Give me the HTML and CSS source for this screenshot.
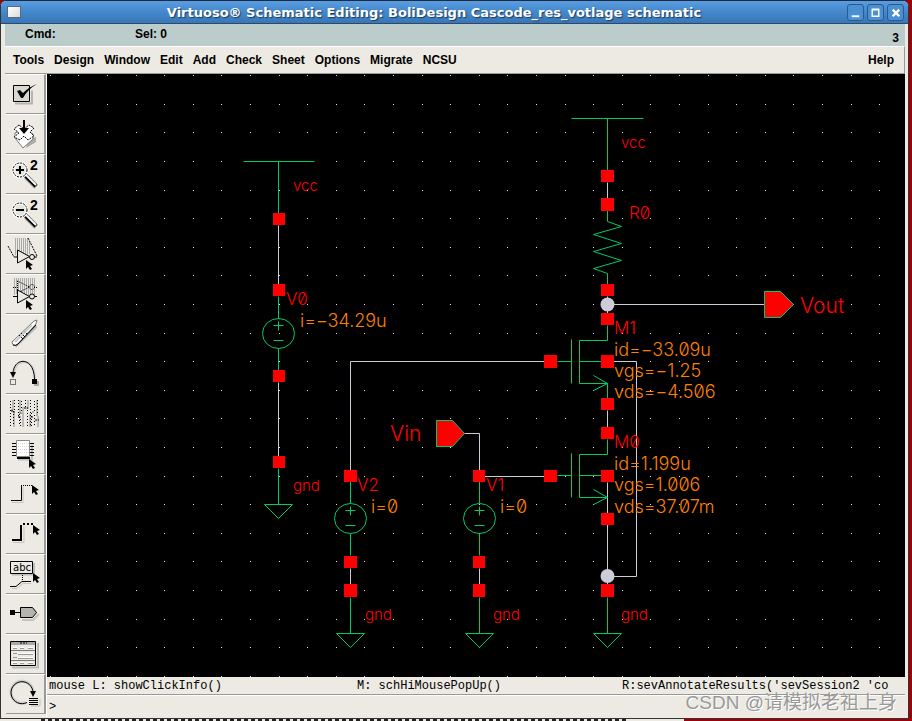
FILE: index.html
```html
<!DOCTYPE html>
<html lang="en">
<head>
  <meta charset="UTF-8" />
  <meta name="viewport" content="width=device-width, initial-scale=1.0" />
  <title>Virtuoso Schematic Editing</title>
  <link rel="stylesheet" href="styles.css">
</head>
<body>
  <div class="window">
    <header class="titlebar">
      <button class="window-menu" type="button" aria-label="Window menu"></button>
      <h1 class="title">Virtuoso® Schematic Editing: BoliDesign Cascode_res_votlage schematic</h1>
      <div class="window-controls">
        <button type="button" aria-label="Minimize"><svg viewBox="0 0 16 16"><path d="M4 12h8" stroke="#fff" stroke-width="2"/></svg></button>
        <button type="button" aria-label="Maximize"><svg viewBox="0 0 16 16"><path d="M4.500 5h7v7h-7z M4 4.500h8" fill="none" stroke="#fff" stroke-width="1.5"/></svg></button>
        <button type="button" aria-label="Close"><svg viewBox="0 0 16 16"><path d="M5 5l7 7M12 5l-7 7" stroke="#fff" stroke-width="2.5"/></svg></button>
      </div>
    </header>

    <div class="frame">
      <div class="infobar">
        <span class="cmd">Cmd:</span>
        <span class="sel">Sel: 0</span>
        <span class="count">3</span>
      </div>

      <nav class="menubar">
        <button type="button">Tools</button>
        <button type="button">Design</button>
        <button type="button">Window</button>
        <button type="button">Edit</button>
        <button type="button">Add</button>
        <button type="button">Check</button>
        <button type="button">Sheet</button>
        <button type="button">Options</button>
        <button type="button">Migrate</button>
        <button type="button">NCSU</button>
        <button type="button" class="help">Help</button>
      </nav>

      <div class="workspace">
        <div class="toolbar">
          <!-- check and save -->
          <button type="button" aria-label="Check and Save"><svg viewBox="0 0 40 40">
            <path d="M9 29.500h17v-13" fill="none" stroke="#b5b5ae" stroke-width="2"/>
            <path d="M7.500 11.500h16v16h-16z" fill="#d8d8d0" stroke="#000"/>
            <path d="M11 17l3-1 3 3q6-6 14-9q-9 5-14 14h-2z" fill="#000"/>
          </svg></button>
          <!-- save -->
          <button type="button" aria-label="Save"><svg viewBox="0 0 40 40">
            <path d="M20 34l10-6v-5l-8 3z" fill="#aaa"/>
            <path d="M9 24l8 10 10-9v-5l-9-5-9 4z" fill="#fff" stroke="#777"/>
            <path d="M13 11l-5 4 5 4-5 4 6 3 4-4 4 4 6-4-4-4 4-4-5-3-5 4z" fill="#fff" stroke="#000" stroke-dasharray="2 1"/>
            <path d="M17 6h2v8h4l-5 6-5-6h4z" fill="#000"/>
          </svg></button>
          <!-- zoom in -->
          <button type="button" aria-label="Zoom in by 2"><svg viewBox="0 0 40 40">
            <path d="M20 23l10 10" stroke="#aaa" stroke-width="5"/>
            <path d="M19 21l11 11" stroke="#000" stroke-width="4"/>
            <path d="M20 21l10 10" stroke="#fff" stroke-width="2"/>
            <circle cx="14" cy="16" r="7" fill="#e4e4dd" stroke="#fff" stroke-width="3"/>
            <circle cx="14" cy="16" r="7" fill="none" stroke="#000" stroke-dasharray="2 1"/>
            <path d="M10 16h8M14 12v8" stroke="#000" stroke-width="2"/>
            <text x="24" y="16" class="icon-num">2</text>
          </svg></button>
          <!-- zoom out -->
          <button type="button" aria-label="Zoom out by 2"><svg viewBox="0 0 40 40">
            <path d="M20 23l10 10" stroke="#aaa" stroke-width="5"/>
            <path d="M19 21l11 11" stroke="#000" stroke-width="4"/>
            <path d="M20 21l10 10" stroke="#fff" stroke-width="2"/>
            <circle cx="14" cy="16" r="7" fill="#e4e4dd" stroke="#fff" stroke-width="3"/>
            <circle cx="14" cy="16" r="7" fill="none" stroke="#000" stroke-dasharray="2 1"/>
            <path d="M10 16h8" stroke="#000" stroke-width="2"/>
            <text x="24" y="16" class="icon-num">2</text>
          </svg></button>
          <!-- stretch -->
          <button type="button" aria-label="Stretch"><svg viewBox="0 0 40 40">
            <path d="M9.500 4v17M11.500 4v12M13.500 4v13M15.500 4v14M17.500 4v15M19.500 4v16M21.500 4v17M23.500 8v12" stroke="#aaa"/>
            <path d="M2 12l6 11M22 4l9 18" stroke="#000" stroke-dasharray="2 1"/>
            <path d="M8 23h3M28 23h3" stroke="#000"/>
            <path d="M11.500 16v13l12-6.500z" fill="#eceae3" stroke="#000"/>
            <circle cx="26" cy="23" r="2.500" fill="#eceae3" stroke="#000"/>
            <use href="#cursor" x="20" y="26"/>
          </svg></button>
          <!-- copy -->
          <button type="button" aria-label="Copy"><svg viewBox="0 0 40 40">
            <path d="M8.500 4v17M10.500 4v16M12.500 4v14M14.500 4v16M16.500 4v16M18.500 4v17M20.500 4v17M22.500 4v17M24.500 4v17M26.500 4v17M28.500 4v18" stroke="#aaa"/>
            <path d="M11.500 7v12l12-6zM7 13.500h4M28 13.500h3" fill="none" stroke="#000" stroke-dasharray="1 1"/>
            <circle cx="26" cy="13" r="2.500" fill="none" stroke="#000" stroke-dasharray="1 1"/>
            <path d="M7 22.500h4M28 22.500h3" stroke="#000"/>
            <path d="M11.500 16v13l12-6.500z" fill="#eceae3" stroke="#000"/>
            <circle cx="26" cy="22.500" r="2.500" fill="#eceae3" stroke="#000"/>
            <use href="#cursor" x="20" y="26"/>
          </svg></button>
          <!-- delete -->
          <button type="button" aria-label="Delete"><svg viewBox="0 0 40 40">
            <path d="M9 32l21-20" stroke="#bbb" stroke-width="4"/>
            <path d="M6 28L28 7l3-1-1 4L11 31q-4 2-5-3z" fill="#fff" stroke="#777"/>
            <path d="M7 31q3 1 5-1L30 11" fill="none" stroke="#000"/>
            <path d="M13 21l4 4M15 19l4 4M18 17l3 3" stroke="#000"/>
            <path d="M9 28L26 11" stroke="#ccc" stroke-width="2"/>
          </svg></button>
          <!-- undo -->
          <button type="button" aria-label="Undo"><svg viewBox="0 0 40 40">
            <path d="M8 21Q9 8 19 8q9 1 10 16" fill="none" stroke="#ccc" stroke-width="2"/>
            <path d="M7 19C8 3 28 2 28.500 25" fill="none" stroke="#000"/>
            <path d="M4 18h6l-3 6z" fill="#000"/>
            <path d="M28 27h5v5h-5z" fill="#aaa"/>
            <path d="M26 25h5v5h-5z" fill="#000"/>
            <path d="M4.500 25.500h5v5h-5z" fill="none" stroke="#000" stroke-dasharray="1 1"/>
          </svg></button>
          <!-- property -->
          <button type="button" aria-label="Property"><svg viewBox="0 0 40 40">
            <path d="M7 6v10M8 19v14M14 6v14M17 13v20M22 6v9M24 20v13M31 6v14M32 22v11" stroke="#bbb" stroke-width="2"/>
            <path d="M4.500 7v26M8.500 6v10h-3M7.500 17v15M12.500 6v17h2v10M15.500 7v12h-2v13M19.500 6v8h2v19M24.500 6v26M28.500 7v11h-3v14M31.500 6v15h-3v10" fill="none" stroke="#000" stroke-dasharray="1 2"/>
            <path d="M5 17h3v3M12 23h3M18 14h4M25 23h3M29 26h4" fill="none" stroke="#000" stroke-dasharray="2 1"/>
          </svg></button>
          <!-- component -->
          <button type="button" aria-label="Component"><svg viewBox="0 0 40 40">
            <path d="M12 25.500h14V11" fill="none" stroke="#bbb" stroke-width="2"/>
            <path d="M6 9.500h22M6 12.500h22M6 15.500h22M6 18.500h22M6 21.500h22" stroke="#000"/>
            <path d="M10.500 6.500h13v16h-13z" fill="#fff" stroke="#888"/>
            <path d="M11 24h13" stroke="#000" stroke-width="2"/>
            <path d="M12 9.500h11M12 12.500h11M12 15.500h11M12 18.500h11" stroke="#ddd" stroke-dasharray="1 1"/>
            <use href="#cursor" x="23" y="25"/>
          </svg></button>
          <!-- wire narrow -->
          <button type="button" aria-label="Wire narrow"><svg viewBox="0 0 40 40">
            <path d="M6 28.500h11V13" fill="none" stroke="#c5c5be"/>
            <path d="M5 26.500h10.500V11" fill="none" stroke="#000"/>
            <path d="M15 11.500h11" stroke="#000" stroke-dasharray="1 1"/>
            <use href="#cursor" x="26" y="11"/>
          </svg></button>
          <!-- wire wide -->
          <button type="button" aria-label="Wire wide"><svg viewBox="0 0 40 40">
            <path d="M7 28.500h11V13" fill="none" stroke="#c5c5be"/>
            <path d="M6 26h9V11" fill="none" stroke="#000" stroke-width="2"/>
            <path d="M17 10h10" stroke="#000" stroke-width="2" stroke-dasharray="2 2"/>
            <use href="#cursor" x="27" y="11"/>
          </svg></button>
          <!-- wire name -->
          <button type="button" aria-label="Wire name"><svg viewBox="0 0 40 40">
            <path d="M6 20.500h22V9" fill="none" stroke="#bbb" stroke-width="2"/>
            <path d="M4.500 7.500h22v12h-22z" fill="#eceae3" stroke="#000"/>
            <text x="7" y="17" class="icon-abc">abc</text>
            <path d="M16.500 21v6" stroke="#000" stroke-dasharray="1 1"/>
            <path d="M4 32.500h6l6-5h9" fill="none" stroke="#000"/>
            <path d="M6 34.500h5l6-5h8" fill="none" stroke="#c5c5be"/>
            <use href="#cursor" x="27" y="19"/>
          </svg></button>
          <!-- pin -->
          <button type="button" aria-label="Pin"><svg viewBox="0 0 40 40">
            <path d="M16 26h11l6-6" fill="none" stroke="#c5c5be" stroke-width="2"/>
            <path d="M4 16h5v5H4zM9 18h5v1H9z" fill="#000"/>
            <path d="M14.500 13.500h12l4 5-4 5h-12z" fill="#b5b5b0" stroke="#000"/>
          </svg></button>
          <!-- command options -->
          <button type="button" aria-label="Command options"><svg viewBox="0 0 40 40">
            <path d="M6 33.500h26V9" fill="none" stroke="#bbb" stroke-width="2"/>
            <path d="M4.500 7.500h25v24h-25z" fill="#eceae3" stroke="#000"/>
            <path d="M5 9.500h24" stroke="#aaa" stroke-width="3"/>
            <path d="M14 9h7" stroke="#000" stroke-dasharray="2 1"/>
            <path d="M5 16.500h24M5 26.500h24" stroke="#777"/>
            <path d="M7 14.500h4M14 14.500h4M22 14.500h5M7 19.500h4M7 23.500h4M12 20.500h15M12 24.500h15M7 29.500h4M14 29.500h4M22 29.500h5" stroke="#999"/>
            <path d="M7 13.500h4M14 13.500h4M22 13.500h5M12 19.500h15M12 23.500h15M7 28.500h4M14 28.500h4M22 28.500h5" stroke="#fff"/>
          </svg></button>
          <!-- repeat -->
          <button type="button" aria-label="Repeat"><svg viewBox="0 0 40 40">
            <path d="M20 28.500A11 11 0 1 1 27 19" fill="none" stroke="#ccc" stroke-width="3"/>
            <path d="M21 28.500A11 11 0 1 1 27 19" fill="none" stroke="#000"/>
            <path d="M24 17h6l-3 6z" fill="#000"/>
            <path d="M25 32h9v-7" fill="none" stroke="#bbb"/>
            <path d="M23 24.500h9M23 26.500h9M23 28.500h9M23 30.500h9" stroke="#000"/>
          </svg></button>
        </div>

        <main class="editor">
          <div class="canvas">
            <svg class="schematic" viewBox="47 74 858 603" preserveAspectRatio="xMinYMin slice">
              <defs>
                <path id="cursor" d="M0 0l7 5-3 1 2 3-2 1-2-3-2 2z" fill="#000"/>
                <!-- five grid steps per tile -->
                <pattern id="grid" x="50" y="75" width="143" height="143" patternUnits="userSpaceOnUse">
                  <path id="gridrow" d="M0 0h1v1h-1zM28 0h1v1h-1zM57 0h1v1h-1zM86 0h1v1h-1zM114 0h1v1h-1z"/>
                  <use href="#gridrow" y="29"/>
                  <use href="#gridrow" y="57"/>
                  <use href="#gridrow" y="86"/>
                  <use href="#gridrow" y="115"/>
                </pattern>
                <g id="source">
                  <ellipse cx="0" cy="0" rx="16" ry="15"/>
                  <path d="M-5 -8h10M0 -12v9M-5 7h10M0 -37v22M0 15v22"/>
                </g>
                <path id="gnd" d="M0 -36V0M-14 0h28l-14 14z"/>
                <g id="nmos">
                  <path d="M-50 0h14M-36 -22v44M0 -36v15h-28v43h28M-28 0h22M-14 14l14 8l-14 7"/>
                </g>
              </defs>

              <rect class="grid" x="47" y="74" width="858" height="603"/>

              <g class="wire" transform="translate(.5 .5)">
                <path d="M278 225v59M278 382v74"/>
                <path d="M544 361H350v109M350 568v16"/>
                <path d="M464 433h15v37M479 476h65M479 568v16"/>
                <path d="M607 182v16M607 296v17M607 304h157"/>
                <path d="M607 410v17M607 482v102M613 361h23v215h-29"/>
              </g>

              <g class="device" transform="translate(.5 .5)">
                <path d="M243 161h71M278 161v52"/>
                <path d="M571 118h72M607 118v52"/>
                <use href="#source" x="278" y="333"/>
                <use href="#source" x="350" y="518"/>
                <use href="#source" x="479" y="518"/>
                <use href="#gnd" x="278" y="504"/>
                <use href="#gnd" x="350" y="633"/>
                <use href="#gnd" x="479" y="633"/>
                <use href="#gnd" x="607" y="633"/>
                <use href="#nmos" x="607" y="361"/>
                <use href="#nmos" x="607" y="475"/>
                <path d="M607 383v15"/>
                <path d="M607 210v11l14 5-28 8 28 9-28 8 28 9-28 8 14 5v11"/>
              </g>

              <g class="port" transform="translate(.5 .5)">
                <path d="M436 420h16l12 13-12 13h-16z"/>
                <path d="M764 291h16l13 13-13 13h-16z"/>
              </g>

              <g class="pin">
                <path d="M273 213h12v12h-12zM273 284h12v12h-12zM273 370h12v12h-12zM273 456h12v12h-12z"/>
                <path d="M344 470h13v12h-13zM344 556h13v12h-13zM344 584h13v13h-13z"/>
                <path d="M473 470h12v12h-12zM473 556h12v12h-12zM473 584h12v13h-12z"/>
                <path d="M544 355h13v13h-13zM544 470h13v12h-13z"/>
                <path d="M601 170h13v12h-13zM601 198h13v13h-13zM601 284h13v12h-13zM601 313h13v12h-13zM601 355h13v13h-13z"/>
                <path d="M601 398h13v12h-13zM601 427h13v12h-13zM601 470h13v12h-13zM601 513h13v12h-13zM601 584h13v13h-13z"/>
              </g>
              <g class="junction">
                <circle cx="607.500" cy="304.500" r="7"/>
                <circle cx="607.500" cy="576" r="7"/>
              </g>

              <g class="net">
                <text x="293" y="191">vcc</text>
                <text x="621" y="148">vcc</text>
                <text x="293" y="491">gnd</text>
                <text x="365" y="620">gnd</text>
                <text x="493" y="620">gnd</text>
                <text x="621" y="620">gnd</text>
              </g>
              <g class="name">
                <text x="286" y="305">V0</text>
                <text x="357" y="491">V2</text>
                <text x="486" y="491">V1</text>
                <text x="629" y="219">R0</text>
                <text x="614" y="334">M1</text>
                <text x="614" y="448">M0</text>
              </g>
              <g class="portname">
                <text x="390" y="441">Vin</text>
                <text x="800" y="313">Vout</text>
              </g>
              <g class="value">
                <text x="300" y="327">i=−34.29u</text>
                <text x="371" y="513">i=0</text>
                <text x="500" y="513">i=0</text>
                <text x="614" y="356">id=−33.09u</text>
                <text x="614" y="377">vgs=−1.25</text>
                <text x="614" y="398">vds=−4.506</text>
                <text x="614" y="470">id=1.199u</text>
                <text x="614" y="491">vgs=1.006</text>
                <text x="614" y="513">vds=37.07m</text>
              </g>
            </svg>
          </div>
          <div class="mouse-line">
            <span>mouse L: showClickInfo()</span>
            <span>M: schHiMousePopUp()</span>
            <span>R:sevAnnotateResults('sevSession2 'co</span>
          </div>
          <div class="prompt">&gt;</div>
        </main>
      </div>
    </div>
  </div>
  <div class="behind"><div class="behind-log"></div></div>
  <div class="watermark">CSDN @请模拟老祖上身</div>
</body>
</html>
```
FILE: styles.css
```css
* {
  box-sizing: border-box;
}
body {
  margin: 0;
  height: 100vh;
  display: flex;
  flex-direction: column;
  background: #a00008;
  overflow: hidden;
  position: relative;
  font-family: "Liberation Sans", Arial, sans-serif;
}
button {
  margin: 0;
  padding: 0;
  border: none;
  background: none;
  font: inherit;
  color: inherit;
}
.window {
  flex: 1;
  min-height: 0;
  display: flex;
  flex-direction: column;
  margin-right: 3px;
  border: 1px solid #333;
  border-top-color: #1d2b40;
  border-radius: 6px 6px 0 0;
  background: #eceae3;
}

/* title bar */
.titlebar {
  display: flex;
  align-items: center;
  height: 23px;
  padding: 0 4px 0 6px;
  border-bottom: 1px solid #2b4a70;
  border-radius: 5px 5px 0 0;
  background: linear-gradient(#5a9de0, #4388cc 50%, #3a76b4);
}
.window-menu {
  width: 14px;
  height: 12px;
  border: 1px solid #5a6a78;
  background: linear-gradient(135deg, #fff, #dcdcdc);
}
.title {
  flex: 1;
  margin: 0;
  text-align: center;
  color: #fff;
  font: bold 13px "DejaVu Sans", sans-serif;
  text-shadow: 1px 1px 1px #1c3a5c;
  white-space: nowrap;
}
.window-controls {
  display: flex;
  gap: 3px;
}
.window-controls button {
  width: 17px;
  height: 17px;
  border: 1px solid #2c5a8c;
  border-radius: 3px;
  background: #4c90d4;
}
.window-controls svg {
  display: block;
  width: 15px;
  height: 15px;
}

/* frame and bars */
.frame {
  flex: 1;
  min-height: 0;
  display: flex;
  flex-direction: column;
  padding: 0 3px 1px 4px;
}
.infobar {
  display: flex;
  height: 22px;
  padding: 0 6px 0 20px;
  background: #bccccb;
  font-size: 12px;
  font-weight: bold;
  line-height: 20px;
}
.cmd {
  width: 110px;
}
.count {
  margin-left: auto;
  line-height: 28px;
}
.menubar {
  display: flex;
  gap: 10px;
  height: 28px;
  padding: 0 10px 0 8px;
  border-top: 1px solid #fff;
  border-right: 1px solid #999;
  border-bottom: 1px solid #999;
  font-size: 12px;
  font-weight: bold;
}
.help {
  margin-left: auto;
}
.workspace {
  flex: 1;
  min-height: 0;
  display: flex;
}

/* tool buttons */
.toolbar {
  width: 42px;
  padding-left: 1px;
  border-right: 1px solid #fff;
}
.toolbar button {
  display: block;
  width: 40px;
  height: 40px;
  border-top: 1px solid #fff;
  border-right: 2px solid #999;
  border-bottom: 1px solid #999;
}
.toolbar svg {
  display: block;
  width: 40px;
  height: 40px;
  margin-top: -1px;
}
.icon-num {
  font: bold 14px "Liberation Sans", Arial, sans-serif;
}
.icon-abc {
  font: 10px "DejaVu Sans", sans-serif;
}

/* drawing area */
.editor {
  flex: 1;
  min-width: 0;
  display: flex;
  flex-direction: column;
}
.canvas {
  flex: 1;
  min-height: 0;
  background: #000;
  overflow: hidden;
}
.schematic {
  display: block;
  width: 100%;
  height: 100%;
  font-family: Inter, "Liberation Sans", sans-serif;
  font-weight: 300;
  font-feature-settings: "zero";
}
#gridrow {
  fill: #dce0f0;
}
#grid {
  shape-rendering: crispEdges;
}
.grid {
  fill: url(#grid);
}
.wire {
  fill: none;
  stroke: #ccccd8;
}
.device {
  fill: none;
  stroke: #00cc66;
}
.port {
  fill: #f00;
  stroke: #00cc66;
}
.pin {
  fill: #f00;
}
.junction {
  fill: #ccccd8;
}
.net {
  fill: #f00;
  font-size: 15px;
}
.name {
  fill: #f00;
  font-size: 17px;
}
.portname {
  fill: #f00;
  font-size: 21px;
}
.value {
  fill: #ff8000;
  font-size: 18px;
}

/* bottom lines */
.mouse-line,
.prompt {
  padding-left: 2px;
  font: 12px "Liberation Mono", "Courier New", monospace;
  white-space: pre;
}
.mouse-line {
  display: grid;
  grid-template-columns: 308fr 265fr 283fr;
  height: 18px;
  line-height: 18px;
  border-bottom: 1px solid #999;
}
.prompt {
  height: 22px;
  line-height: 22px;
  border-top: 1px solid #fff;
}

/* windows underneath */
.behind {
  height: 2px;
}
.behind-log {
  width: 75%;
  height: 2px;
  padding: 0 55px 0 41px;
  background: repeating-linear-gradient(90deg, #222 0 4px, #eceae3 4px 7px) content-box, #eceae3;
}
.watermark {
  position: absolute;
  right: 15px;
  bottom: 4px;
  color: #999;
  font: 19px/28px "Liberation Sans", "Noto Sans CJK SC", sans-serif;
  text-shadow: 1px 1px 0 #fff;
  white-space: nowrap;
}
```
